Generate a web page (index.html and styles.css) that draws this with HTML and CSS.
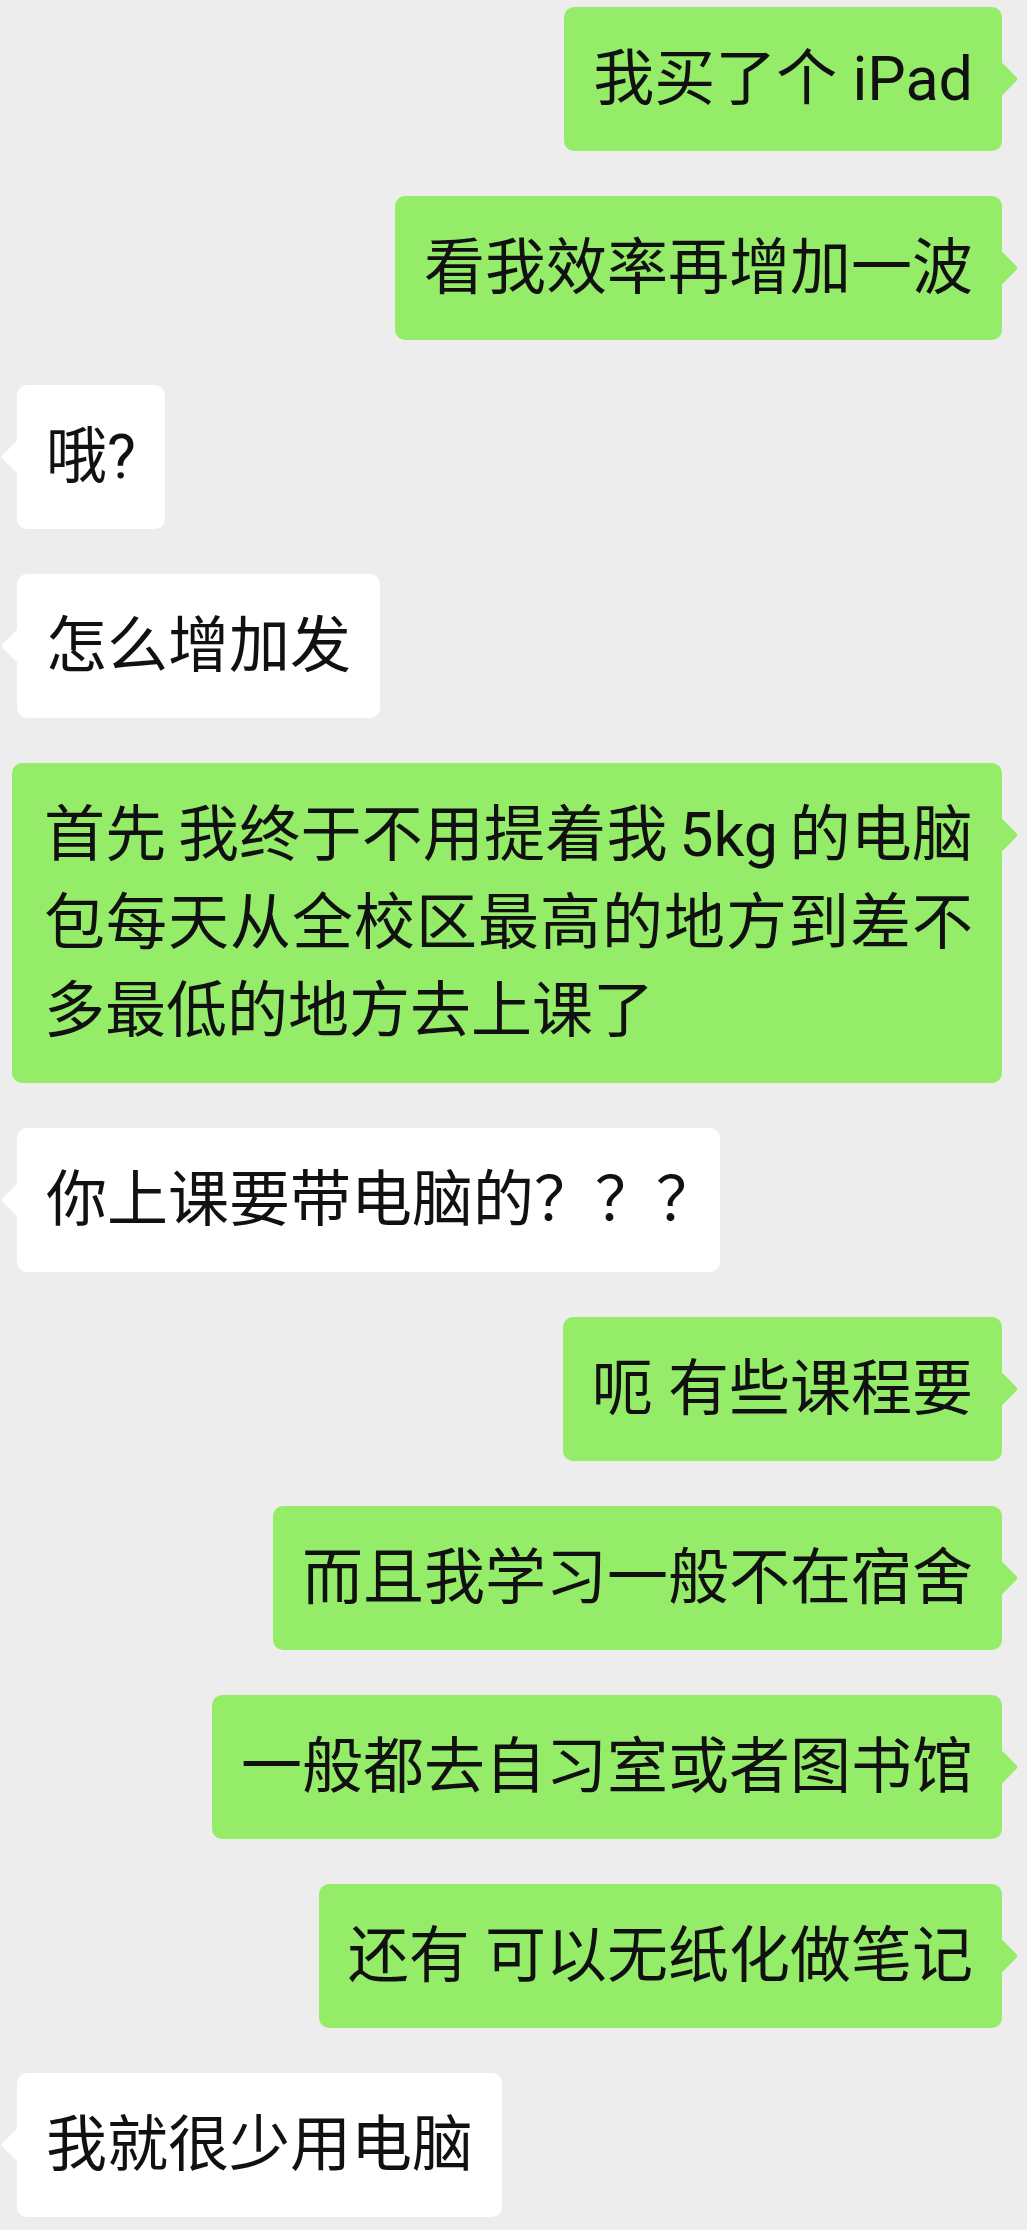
FILE: index.html
```html
<!DOCTYPE html>
<html lang="zh-CN">

<head>
    <meta charset="UTF-8">
    <meta name="viewport" content="width=device-width, initial-scale=1.0">
    <title>chat</title>
    <link rel="stylesheet" href="styles.css">
</head>

<body>

    <div class="chat">
        <div class="msg me">我买了个 iPad</div>
        <div class="msg me">看我效率再增加一波</div>
        <div class="msg other">哦?</div>
        <div class="msg other">怎么增加发</div>
        <div class="msg me long">首先 我终于不用提着我 5kg 的电脑包每天从全校区最高的地方到差不多最低的地方去上课了</div>
        <div class="msg other trim">你上课要带电脑的？？？</div>
        <div class="msg me">呃 有些课程要</div>
        <div class="msg me">而且我学习一般不在宿舍</div>
        <div class="msg me">一般都去自习室或者图书馆</div>
        <div class="msg me">还有 可以无纸化做笔记</div>
        <div class="msg other">我就很少用电脑</div>
    </div>

</body>

</html>
```

FILE: styles.css
```css
* {
    box-sizing: border-box;
    padding: 0;
    margin: 0;
}

body {
    background-color: #ededed;
    font-family: Roboto, "Noto Sans CJK SC", sans-serif;
    color: #111111;
}

.chat {
    display: flex;
    flex-direction: column;
    gap: 45px;
    padding: 7px 25px 0 12px;
}

.msg {
    position: relative;
    max-width: 990px;
    padding: 28px 29px;
    border-radius: 10px;
    font-size: 61px;
    line-height: 88px;
    white-space: nowrap;
}

/* 小三角 */
.msg::before {
    content: "";
    position: absolute;
    top: 59px;
    width: 26px;
    height: 26px;
    border-radius: 3px;
    transform: rotate(45deg);
    background-color: inherit;
}

.me {
    align-self: flex-end;
    background-color: #95ec69;
}

.me::before {
    right: -11px;
}

.other {
    align-self: flex-start;
    margin-left: 5px;
    background-color: #ffffff;
}

.other::before {
    left: -11px;
}

.long {
    padding-left: 32px;
    white-space: normal;
    word-spacing: -4px;
    text-align: justify;
}

/* 句尾全角问号只占半格 */
.trim {
    padding-right: 3px;
}
```
